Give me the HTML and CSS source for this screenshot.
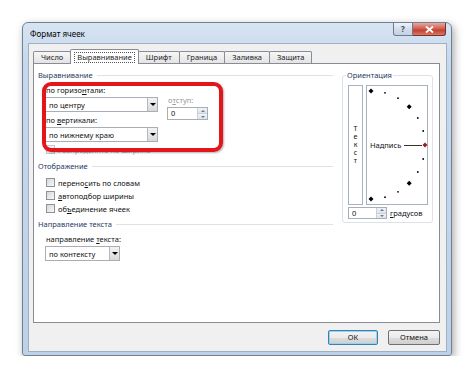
FILE: index.html
```html
<!DOCTYPE html>
<html lang="ru">
<head>
    <meta charset="UTF-8">
    <title>Формат ячеек</title>
    <link rel="stylesheet" href="styles.css">
</head>
<body>
    <div class="desk">
        <div class="window">
            <div class="titlebar">
                <span class="title">Формат ячеек</span>
                <div class="caption-btns">
                    <span class="cbtn help">?</span>
                    <span class="cbtn close">
                        <svg width="9" height="7" viewBox="0 0 9 7"><path d="M1 0.5 L8 6.5 M8 0.5 L1 6.5" stroke="#fff" stroke-width="1.8"/></svg>
                    </span>
                </div>
            </div>
            <div class="client">
                <div class="tabs">
                    <span class="tab">Число</span>
                    <span class="tab active"><span class="focus">Выравнивание</span></span>
                    <span class="tab">Шрифт</span>
                    <span class="tab">Граница</span>
                    <span class="tab">Заливка</span>
                    <span class="tab">Защита</span>
                </div>
                <div class="panel">
                    <div class="left">
                        <div class="group-head">Выравнивание</div>
                        <div class="align-body">
                            <div class="sel-col">
                                <div class="lbl first">по горизо<u>н</u>тали:</div>
                                <div class="select wide"><span class="val">по центру</span><span class="drop"></span></div>
                                <div class="lbl">по <u>в</u>ертикали:</div>
                                <div class="select wide"><span class="val">по нижнему краю</span><span class="drop"></span></div>
                            </div>
                            <div class="indent-col">
                                <div class="lbl gray">о<u>т</u>ступ:</div>
                                <div class="spin"><span class="val">0</span><span class="arrows"><i class="up"></i><i class="down"></i></span></div>
                            </div>
                        </div>
                        <div class="check disabled distribute"><span class="box"></span><span>Распределять по ширине</span></div>

                        <div class="group-head">Отображение</div>
                        <div class="checks">
                            <div class="check"><span class="box"></span><span>перено<u>с</u>ить по словам</span></div>
                            <div class="check"><span class="box"></span><span><u>а</u>втоподбор ширины</span></div>
                            <div class="check"><span class="box"></span><span>об<u>ъ</u>единение ячеек</span></div>
                        </div>

                        <div class="group-head dir">Направление текста</div>
                        <div class="dir-body">
                            <div class="lbl first">направление <u>т</u>екста:</div>
                            <div class="select narrow"><span class="val">по контексту</span><span class="drop"></span></div>
                        </div>
                    </div>

                    <fieldset class="orient">
                        <legend>Ориентация</legend>
                        <div class="orient-boxes">
                            <div class="vtext"><span>Т</span><span>е</span><span>к</span><span>с</span><span>т</span></div>
                            <div class="dial">
                                <svg width="62" height="120" viewBox="0 0 62 120">
                                    <g fill="#000">
                                        <path d="M5 3.5 L7.5 6 L5 8.5 L2.5 6 Z"/>
                                        <circle cx="19" cy="7.8" r="0.9"/>
                                        <circle cx="32" cy="13.2" r="0.9"/>
                                        <path d="M43.2 19.3 L45.7 21.8 L43.2 24.3 L40.7 21.8 Z"/>
                                        <circle cx="51.8" cy="33" r="0.9"/>
                                        <circle cx="57.2" cy="46" r="0.9"/>
                                        <circle cx="57.2" cy="74" r="0.9"/>
                                        <circle cx="51.8" cy="87" r="0.9"/>
                                        <path d="M43.2 95.7 L45.7 98.2 L43.2 100.7 L40.7 98.2 Z"/>
                                        <circle cx="32" cy="106.8" r="0.9"/>
                                        <circle cx="19" cy="112.2" r="0.9"/>
                                        <path d="M5 111.5 L7.5 114 L5 116.5 L2.5 114 Z"/>
                                    </g>
                                    <line x1="38" y1="60.5" x2="56" y2="60.5" stroke="#333" stroke-width="1"/>
                                    <path d="M59 57.5 L61.5 60 L59 62.5 L56.5 60 Z" fill="#9b1b2a"/>
                                    <text x="4" y="63" class="dial-text">Надпись</text>
                                </svg>
                            </div>
                        </div>
                        <div class="deg-row">
                            <div class="spin deg"><span class="val">0</span><span class="arrows"><i class="up"></i><i class="down"></i></span></div>
                            <span class="deg-lbl"><u>г</u>радусов</span>
                        </div>
                    </fieldset>

                    <div class="highlight"></div>
                </div>
                <div class="buttons">
                    <span class="btn default">ОК</span>
                    <span class="btn">Отмена</span>
                </div>
            </div>
        </div>
    </div>
</body>
</html>
```

FILE: styles.css
```css
body {
    margin: 0;
    background: #ffffff;
    font-family: "Noto Sans", "Open Sans", sans-serif;
    font-size: 7.5px;
    color: #111111;
}
u {
    text-decoration-thickness: 1px;
    text-underline-offset: 1px;
}
.desk {
    padding: 22px 0 0 22px;
}
.window {
    width: 430px;
    height: 334px;
    box-sizing: border-box;
    border: 1px solid #6f8197;
    border-radius: 6px 6px 3px 3px;
    background: linear-gradient(#d7e4f2, #c6d8ec 40px, #bdd1e7);
    padding: 0 4px 3px 5px;
    display: flex;
    flex-direction: column;
    box-shadow: 2px 3px 9px rgba(0, 0, 0, 0.35);
}
.titlebar {
    height: 20px;
    display: flex;
    justify-content: space-between;
    align-items: flex-start;
}
.title {
    line-height: 21px;
    padding-left: 2px;
    color: #000;
    font-size: 8px;
}
.caption-btns {
    display: flex;
    margin-right: 1px;
}
.cbtn {
    height: 13px;
    box-sizing: border-box;
    display: flex;
    align-items: center;
    justify-content: center;
    border: 1px solid #6c7c90;
    border-top: none;
}
.help {
    width: 20px;
    border-radius: 0 0 0 3px;
    background: linear-gradient(#eef3f8, #d3dde9 50%, #c5d2e2);
    color: #3f4c5e;
    font-size: 8px;
    font-weight: bold;
    line-height: 1;
}
.close {
    width: 33px;
    border-radius: 0 0 3px 0;
    border-color: #7b3028;
    border-left: none;
    background: linear-gradient(#e9a79d, #cf5a4c 50%, #c1402f 60%, #d77a68);
}
.client {
    flex: 1;
    background: #f0f0f0;
    border: 1px solid #9fb0c3;
    padding: 5px 6px 0 4px;
    display: flex;
    flex-direction: column;
}
.tabs {
    display: flex;
    align-items: flex-end;
    height: 14px;
}
.tab {
    height: 12px;
    box-sizing: border-box;
    padding: 0 7px;
    border: 1px solid #898c95;
    border-bottom: none;
    margin-right: -1px;
    background: linear-gradient(#f6f6f6, #e4e4e4);
    line-height: 11px;
    color: #222;
    border-radius: 2px 2px 0 0;
}
.tab.active {
    height: 15px;
    margin-bottom: -1px;
    padding: 2px 3px 0;
    background: #ffffff;
    position: relative;
    z-index: 1;
}
.focus {
    display: block;
    outline: 1px dotted #555;
    outline-offset: -1px;
    padding: 0 3px;
    line-height: 10px;
    height: 11px;
}
.panel {
    height: 260px;
    box-sizing: border-box;
    border: 1px solid #898c95;
    background: #ffffff;
    padding: 5px 6px 0 4px;
    display: flex;
    gap: 6px;
    position: relative;
}
.left {
    flex: 1;
    line-height: 12px;
}
.group-head {
    display: flex;
    align-items: center;
    gap: 4px;
    color: #1e3a5f;
    margin-right: 3px;
}
.group-head::after {
    content: "";
    flex: 1;
    height: 1px;
    background: #dbe2e8;
}
.align-body {
    display: flex;
    padding-left: 7px;
}
.sel-col {
    width: 113px;
}
.lbl {
    margin-top: 2px;
    padding-left: 1px;
    margin-bottom: 1px;
}
.lbl.first {
    margin-top: 3px;
}
.gray {
    color: #9a9a9a;
}
.select {
    height: 15px;
    box-sizing: border-box;
    border: 1px solid #a9aeb5;
    background: #ffffff;
    display: flex;
    align-items: center;
    justify-content: space-between;
}
.select .val {
    padding-left: 3px;
    line-height: 12px;
}
.wide {
    width: 113px;
}
.narrow {
    width: 75px;
}
.drop {
    width: 10px;
    height: 13px;
    box-sizing: border-box;
    border-left: 1px solid #b5b9be;
    background: linear-gradient(#f3f3f3, #d9d9d9);
    display: flex;
    align-items: center;
    justify-content: center;
}
.drop::before {
    content: "";
    border-left: 3px solid transparent;
    border-right: 3px solid transparent;
    border-top: 3px solid #000;
}
.indent-col {
    margin-left: 9px;
    padding-top: 10px;
}
.indent-col .lbl {
    margin-top: 3px;
}
.spin {
    width: 41px;
    height: 13px;
    box-sizing: border-box;
    border: 1px solid #a9aeb5;
    background: #ffffff;
    display: flex;
    justify-content: space-between;
    line-height: 11px;
}
.spin .val {
    padding-left: 3px;
}
.arrows {
    width: 9px;
    display: flex;
    flex-direction: column;
    border-left: 1px solid #c8d0da;
}
.arrows i {
    flex: 1;
    display: flex;
    align-items: center;
    justify-content: center;
    background: linear-gradient(#f1f4f8, #dde4ec);
}
.arrows i.up {
    border-bottom: 1px solid #c8d0da;
}
.arrows i.up::before {
    content: "";
    border-left: 2px solid transparent;
    border-right: 2px solid transparent;
    border-bottom: 2px solid #6b7a8c;
}
.arrows i.down::before {
    content: "";
    border-left: 2px solid transparent;
    border-right: 2px solid transparent;
    border-top: 2px solid #6b7a8c;
}
.check {
    display: flex;
    align-items: center;
    gap: 3px;
    height: 13px;
    padding-left: 8px;
}
.box {
    width: 9px;
    height: 9px;
    box-sizing: border-box;
    border: 1px solid #8e9196;
    background: linear-gradient(135deg, #d6d8db, #f7f7f7);
}
.check.disabled {
    color: #a8a8a8;
}
.check.disabled .box {
    border-color: #c6c8cb;
    background: #f4f4f4;
}
.distribute {
    margin-top: 1px;
    margin-bottom: 4px;
}
.checks {
    margin-top: 4px;
}
.group-head.dir {
    margin-top: 3px;
}
.dir-body {
    padding-left: 7px;
}
.orient {
    width: 91px;
    box-sizing: border-box;
    margin: 0;
    border: 1px solid #dbe2e8;
    border-radius: 3px;
    padding: 4px 4px 3px 5px;
    align-self: flex-start;
    line-height: 12px;
    min-inline-size: 0;
    height: 154px;
}
.orient legend {
    padding: 0 1px;
    margin-left: -2px;
    color: #1e3a5f;
}
.orient-boxes {
    display: flex;
    gap: 3px;
}
.vtext {
    width: 15px;
    height: 120px;
    box-sizing: border-box;
    border: 1px solid #a9b3bf;
    display: flex;
    flex-direction: column;
    align-items: center;
    justify-content: center;
    line-height: 8px;
    font-size: 7px;
}
.dial {
    width: 62px;
    height: 120px;
    box-sizing: border-box;
    border: 1px solid #a9b3bf;
}
.dial svg {
    display: block;
    margin: -1px;
}
.dial-text {
    font-family: "Noto Sans", "Open Sans", sans-serif;
    font-size: 7.5px;
    fill: #111;
}
.deg-row {
    display: flex;
    align-items: center;
    gap: 3px;
    margin-top: 2px;
}
.spin.deg {
    width: 39px;
    height: 12px;
}
.highlight {
    position: absolute;
    left: 8px;
    top: 18px;
    width: 181px;
    height: 70px;
    box-sizing: border-box;
    border: 4px solid #e3161c;
    border-radius: 9px;
    box-shadow: 1px 1px 2px rgba(0, 0, 0, 0.3);
}
.buttons {
    display: flex;
    justify-content: flex-end;
    gap: 10px;
    padding-top: 7px;
}
.btn {
    width: 52px;
    height: 15px;
    box-sizing: border-box;
    border: 1px solid #707070;
    border-radius: 2px;
    background: linear-gradient(#f3f3f3, #ebebeb 50%, #dddddd 51%, #cfcfcf);
    text-align: center;
    line-height: 13px;
}
.btn.default {
    width: 50px;
    border-color: #3c7fb1;
    box-shadow: inset 0 0 0 1px #97d3f0;
}
```
